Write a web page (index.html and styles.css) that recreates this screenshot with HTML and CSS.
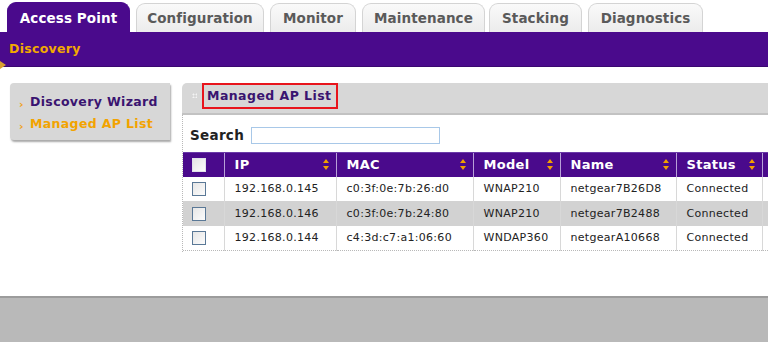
FILE: index.html
```html
<!DOCTYPE html>
<html>
<head>
<meta charset="utf-8">
<link rel="stylesheet" href="styles.css">
</head>
<body>
<nav class="tabs">
  <div class="tab active">Access Point</div>
  <div class="tab">Configuration</div>
  <div class="tab">Monitor</div>
  <div class="tab">Maintenance</div>
  <div class="tab">Stacking</div>
  <div class="tab">Diagnostics</div>
</nav>
<div class="subnav"><span class="subnav-item">Discovery</span><span class="subnav-mark"></span></div>
<main class="content">
  <aside class="side">
    <div class="side-item"><span class="bullet">›</span>Discovery Wizard</div>
    <div class="side-item current"><span class="bullet">›</span>Managed AP List</div>
  </aside>
  <section class="panel">
    <header class="panel-head">
      <span class="grip"></span>
      <span class="panel-title">Managed AP List</span>
    </header>
    <div class="panel-body">
      <div class="search-row">
        <label class="search-label">Search</label>
        <input class="search-input" type="text">
      </div>
      <table class="grid">
        <thead>
          <tr>
            <th class="c-check"><span class="box head-box"></span></th>
            <th class="c-ip"><div class="th-in">IP<span class="sort"></span></div></th>
            <th class="c-mac"><div class="th-in">MAC<span class="sort"></span></div></th>
            <th class="c-model"><div class="th-in">Model<span class="sort"></span></div></th>
            <th class="c-name"><div class="th-in">Name<span class="sort"></span></div></th>
            <th class="c-status"><div class="th-in">Status<span class="sort"></span></div></th>
            <th class="c-extra"></th>
          </tr>
        </thead>
        <tbody>
          <tr>
            <td class="c-check"><span class="box"></span></td>
            <td>192.168.0.145</td><td>c0:3f:0e:7b:26:d0</td><td>WNAP210</td><td>netgear7B26D8</td><td>Connected</td><td></td>
          </tr>
          <tr class="alt">
            <td class="c-check"><span class="box"></span></td>
            <td>192.168.0.146</td><td>c0:3f:0e:7b:24:80</td><td>WNAP210</td><td>netgear7B2488</td><td>Connected</td><td></td>
          </tr>
          <tr>
            <td class="c-check"><span class="box"></span></td>
            <td>192.168.0.144</td><td>c4:3d:c7:a1:06:60</td><td>WNDAP360</td><td>netgearA10668</td><td>Connected</td><td></td>
          </tr>
        </tbody>
      </table>
    </div>
  </section>
</main>
<footer class="footer"></footer>
</body>
</html>
```

FILE: styles.css
```css
* { box-sizing: border-box; }
html, body { margin: 0; padding: 0; }
body {
  width: 768px;
  height: 342px;
  overflow: hidden;
  background: #fff;
  font-family: "DejaVu Sans", Verdana, sans-serif;
  display: flex;
  flex-direction: column;
}
.tabs {
  height: 32px;
  padding: 3px 0 0 7px;
  display: flex;
  gap: 6px;
  align-items: flex-end;
}
.tab {
  height: 29px;
  border: 1px solid #d4d4d4;
  border-bottom: none;
  border-radius: 9px 9px 0 0;
  background: linear-gradient(#fafafa, #ececec);
  color: #5a5a5a;
  font-weight: bold;
  font-size: 13.5px;
  line-height: 29px;
  letter-spacing: 0.1px;
  text-align: center;
  padding: 0;
}
.tab.active {
  background: #4a0a8c;
  border-color: #4a0a8c;
  color: #fff;
  height: 30px;
  line-height: 30px;
}
.tab:nth-child(1) { width: 123px; }
.tab:nth-child(2) { width: 128px; }
.tab:nth-child(3) { width: 86px; }
.tab:nth-child(4) { width: 123px; }
.tab:nth-child(5) { width: 93px; margin-left: -2px; }
.tab:nth-child(6) { width: 115px; }

.subnav {
  height: 35px;
  background: #4a0a8c;
  border-bottom: 1px solid #3a0870;
  padding: 6px 0 0 9px;
  position: relative;
}
.subnav-item {
  color: #f2a900;
  font-weight: bold;
  font-size: 12.5px;
  letter-spacing: 0.3px;
}
.subnav-mark {
  position: absolute;
  left: 0;
  bottom: -3px;
  width: 0; height: 0;
  border-top: 4px solid transparent;
  border-bottom: 4px solid transparent;
  border-left: 6px solid #d9a030;
}

.content {
  height: 229px;
  display: flex;
  gap: 12px;
  padding: 16px 0 0 10px;
  align-items: flex-start;
}
.side {
  width: 161px;
  height: 57px;
  background: #d7d7d7;
  border-radius: 4px 0 0 4px;
  box-shadow: 1px 2px 2px #a9a9a9;
  padding: 11px 0 0 9px;
  display: flex;
  flex-direction: column;
  gap: 6px;
}
.side-item {
  font-size: 12.5px;
  font-weight: bold;
  color: #3a1470;
  display: flex;
  align-items: baseline;
  letter-spacing: 0.35px;
  line-height: 16px;
  height: 16px;
}
.side-item.current { color: #f2a300; }
.bullet {
  color: #f0a020;
  font-size: 11px;
  width: 11px;
  line-height: 16px;
  position: relative;
  top: 2px;
}

.panel {
  flex: 1;
  height: 169px;
  display: flex;
  flex-direction: column;
}
.panel-head {
  height: 32px;
  background: #d7d7d7;
  border-radius: 5px 0 0 0;
  border-bottom: 2px solid #c2c2c2;
  display: flex;
  align-items: flex-start;
  padding-left: 10px;
}
.grip {
  width: 5px;
  height: 5px;
  margin: 10px 5px 0 0;
  background:
    radial-gradient(circle, #f4f4f4 0.8px, transparent 1.2px) 0 0 / 3px 3px;
}
.panel-title {
  height: 26px;
  width: 136px;
  border: 2px solid #e8141c;
  color: #3a1470;
  font-weight: bold;
  font-size: 12.5px;
  line-height: 21px;
  padding-left: 3px;
  letter-spacing: 0.45px;
}
.panel-body {
  flex: 1;
  border-left: 1px dotted #b8b8b8;
  background: #fff;
  display: flex;
  flex-direction: column;
}
.search-row {
  height: 37px;
  display: flex;
  align-items: center;
  padding: 3px 0 0 7px;
  gap: 7px;
}
.search-label {
  font-weight: bold;
  font-size: 13.5px;
  color: #222;
  letter-spacing: 0.3px;
}
.search-input {
  width: 189px;
  height: 17px;
  border: 1px solid #a8c8e8;
  margin: 0;
  padding: 0;
}

.grid {
  border-collapse: collapse;
  width: 585px;
  table-layout: fixed;
  border-bottom: 1px dotted #b8b8b8;
}
.grid th {
  background: #4a0a8c;
  color: #fff;
  font-size: 13px;
  font-weight: bold;
  text-align: left;
  height: 24px;
  padding: 0 6px 0 10px;
  border-left: 1px solid #b8a0d8;
  border-top: 1px solid #6a3aa8;
  letter-spacing: 0.3px;
}
.grid th:first-child { border-left: none; }
.th-in {
  display: flex;
  align-items: center;
  justify-content: space-between;
}
.sort {
  width: 7px;
  height: 11px;
  position: relative;
}
.sort::before, .sort::after {
  content: "";
  position: absolute;
  left: 0;
  border-left: 3.5px solid transparent;
  border-right: 3.5px solid transparent;
}
.sort::before { top: 0; border-bottom: 4px solid #f2a000; }
.sort::after { bottom: 0; border-top: 4px solid #f2a000; }

.grid td {
  font-size: 11px;
  color: #222;
  height: 24.7px;
  padding: 0 0 0 10px;
  border-left: 1px solid #d8d8d8;
  letter-spacing: 0.3px;
  white-space: nowrap;
}
.grid td:first-child { border-left: none; }
.grid tr.alt td { background: #d2d2d2; }
.grid .c-check { width: 41px; padding: 0 0 0 9px; }
.grid .c-ip { width: 112px; }
.grid .c-mac { width: 137px; }
.grid .c-model { width: 87px; }
.grid .c-name { width: 116px; }
.grid .c-status { width: 86px; }
.box {
  display: block;
  width: 14px;
  height: 14px;
  border: 1px solid #5a7896;
  background: linear-gradient(135deg, #e6e6e6, #fcfcfc);
}
.head-box {
  border-color: #e0e0ea;
  background: linear-gradient(135deg, #e4e4e4, #fcfcfc);
}

.footer {
  flex: 1;
  background: #b9b9b9;
  border-top: 2px solid #9c9c9c;
}
```
